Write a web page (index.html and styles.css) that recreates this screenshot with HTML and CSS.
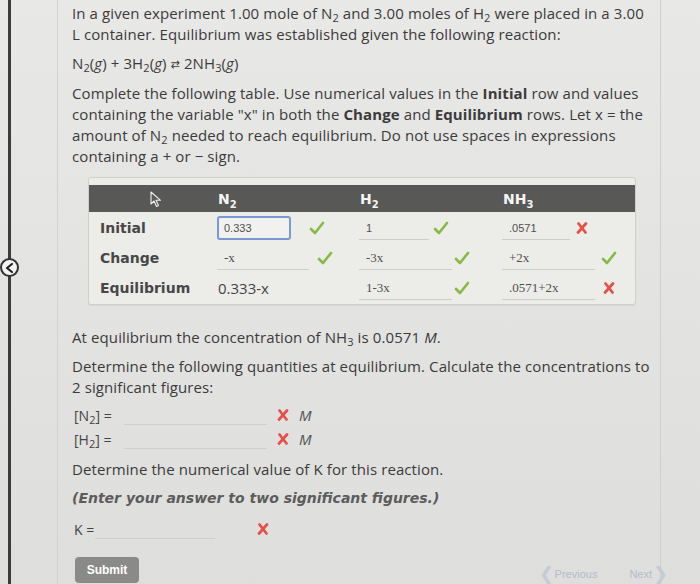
FILE: index.html
```html
<!DOCTYPE html>
<html>
<head>
<meta charset="utf-8">
<link rel="stylesheet" href="styles.css">
</head>
<body>
<div class="screen">
  <div class="rail">
    <div class="rail-line"></div>
    <div class="rail-btn">
      <svg width="12" height="12" viewBox="0 0 12 12"><path d="M8 2 L3 6 L8 10" fill="none" stroke="#222" stroke-width="2.2" stroke-linecap="round" stroke-linejoin="round"/></svg>
    </div>
  </div>
  <div class="page">
    <p class="para first">In a given experiment 1.00 mole of N<sub>2</sub> and 3.00 moles of H<sub>2</sub> were placed in a 3.00 L container. Equilibrium was established given the following reaction:</p>
    <p class="para eq">N<sub>2</sub>(<i>g</i>) + 3H<sub>2</sub>(<i>g</i>) <span class="arrows">⇄</span> 2NH<sub>3</sub>(<i>g</i>)</p>
    <p class="para">Complete the following table. Use numerical values in the <b>Initial</b> row and values containing the variable "x" in both the <b>Change</b> and <b>Equilibrium</b> rows. Let x = the amount of N<sub>2</sub> needed to reach equilibrium. Do not use spaces in expressions containing a + or − sign.</p>

    <div class="ice">
      <div class="ice-head">
        <div class="hc hc-label">
          <svg class="cursor" width="12" height="17" viewBox="0 0 12 17"><path d="M1 1 L1 13 L4 10 L6.5 15.5 L8.5 14.6 L6 9.3 L10.5 9.3 Z" fill="#5a5a58" stroke="#f0f0f0" stroke-width="1.1" stroke-linejoin="round"/></svg>
        </div>
        <div class="hc c1">N<sub>2</sub></div>
        <div class="hc c2">H<sub>2</sub></div>
        <div class="hc c3">NH<sub>3</sub></div>
      </div>
      <div class="ice-row">
        <div class="rl">Initial</div>
        <div class="cell c1"><span class="field boxed w74 sans">0.333</span><span class="mk m-ok ml26"></span></div>
        <div class="cell c2"><span class="field w70 sans">1</span><span class="mk m-ok ml4"></span></div>
        <div class="cell c3"><span class="field w68 sans">.0571</span><span class="mk m-no ml4"></span></div>
      </div>
      <div class="ice-row">
        <div class="rl">Change</div>
        <div class="cell c1"><span class="field w92">-x</span><span class="mk m-ok ml8"></span></div>
        <div class="cell c2"><span class="field w93">-3x</span><span class="mk m-ok ml2"></span></div>
        <div class="cell c3"><span class="field w93">+2x</span><span class="mk m-ok ml6"></span></div>
      </div>
      <div class="ice-row">
        <div class="rl">Equilibrium</div>
        <div class="cell c1"><span class="plain">0.333-x</span></div>
        <div class="cell c2"><span class="field w93">1-3x</span><span class="mk m-ok ml2"></span></div>
        <div class="cell c3"><span class="field w93">.0571+2x</span><span class="mk m-no ml6"></span></div>
      </div>
    </div>

    <p class="para at">At equilibrium the concentration of NH<sub>3</sub> is 0.0571 <i>M</i>.</p>
    <p class="para">Determine the following quantities at equilibrium. Calculate the concentrations to 2 significant figures:</p>
    <div class="ans-list">
      <div class="ans"><span class="al">[N<sub>2</sub>] =</span><span class="aline w143"></span><span class="mk m-no ml8"></span><i class="unit">M</i></div>
      <div class="ans"><span class="al">[H<sub>2</sub>] =</span><span class="aline w143"></span><span class="mk m-no ml8"></span><i class="unit">M</i></div>
    </div>
    <p class="para">Determine the numerical value of K for this reaction.</p>
    <p class="para hint">(Enter your answer to two significant figures.)</p>
    <div class="ans k"><span class="al">K =</span><span class="aline w120"></span><span class="mk m-no ml40"></span></div>

    <div class="foot">
      <div class="submit">Submit</div>
      <div class="nav">
        <span class="chev">❮</span><span class="prev">Previous</span>
        <span class="next">Next</span><span class="chev">❯</span>
      </div>
    </div>
  </div>
  <div class="side"></div>
</div>
</body>
</html>
```
FILE: styles.css
```css
html, body {
  margin: 0;
  padding: 0;
}
body {
  width: 700px;
  height: 584px;
  overflow: hidden;
  background: linear-gradient(180deg, #e8e8e6 0%, #e3e3e1 50%, #dededc 100%);
  font-family: "Open Sans", "DejaVu Sans", sans-serif;
  color: #3b3b3b;
}
.screen {
  display: flex;
  height: 584px;
}
.rail {
  width: 57px;
  flex: none;
  position: relative;
}
.rail-line {
  position: absolute;
  left: 8px;
  top: 0;
  bottom: 0;
  width: 3px;
  background: #3c3c3c;
}
.rail-btn {
  position: absolute;
  left: 0;
  top: 258px;
  width: 19px;
  height: 19px;
  border-radius: 50%;
  background: #f4f4f4;
  border: 2px solid #333;
  box-sizing: border-box;
  display: flex;
  align-items: center;
  justify-content: center;
}
.page {
  width: 604px;
  flex: none;
  border-left: 1px solid #d2d2d0;
  border-right: 1px solid #cfcfcd;
  padding-left: 14px;
  box-sizing: border-box;
  position: relative;
}
.side {
  flex: 1;
}
.para {
  margin: 0 0 8px 0;
  font-size: 15px;
  line-height: 21px;
  width: 580px;
  letter-spacing: 0.1px;
}
.para.first {
  margin-top: 3px;
}
.para.eq {
  margin-bottom: 9px;
}
b {
  font-weight: 700;
}
sub {
  font-size: 11px;
  line-height: 0;
  vertical-align: -3px;
}
.arrows {
  font-size: 11px;
  vertical-align: 1px;
}
.ice {
  margin: 10px 0 0 16px;
  width: 548px;
  height: 128px;
  background: #ecece9;
  border: 1px solid #cfcfcc;
  border-radius: 3px;
  padding-top: 7px;
  box-sizing: border-box;
  box-shadow: 0 1px 1px rgba(0,0,0,0.06);
}
.ice-head {
  display: flex;
  height: 27px;
  background: #585856;
  color: #f4f4f4;
  font-family: "DejaVu Sans", sans-serif;
  font-weight: bold;
  font-size: 14px;
  align-items: center;
}
.ice-head sub {
  font-size: 10px;
  vertical-align: -4px;
}
.hc-label {
  width: 129px;
  display: flex;
  justify-content: center;
  padding-left: 4px;
  box-sizing: border-box;
}
.cursor {
  margin-top: 2px;
}
.c1 { width: 142px; flex: none; }
.c2 { width: 143px; flex: none; }
.c3 { width: 130px; flex: none; }
.hc.c1, .hc.c2, .hc.c3 {
  padding-top: 1px;
}
.ice-row {
  display: flex;
  align-items: center;
  height: 30px;
}
.ice-row:nth-child(2) { margin-top: 1px; }
.rl {
  width: 117px;
  padding-left: 11px;
  flex: none;
  font-family: "DejaVu Sans", sans-serif;
  font-weight: bold;
  font-size: 14px;
  color: #474747;
  box-sizing: content-box;
}
.cell {
  display: flex;
  align-items: center;
}
.field {
  height: 23px;
  box-sizing: border-box;
  border-bottom: 1px solid #cdcdca;
  font-family: "Liberation Serif", serif;
  font-size: 13px;
  color: #505050;
  padding-left: 7px;
  display: flex;
  align-items: center;
  flex: none;
}
.field.sans {
  font-family: "Liberation Sans", sans-serif;
  font-size: 11px;
}
.field.boxed {
  border: 2px solid #7c97d6;
  border-radius: 3px;
  background: #f1f1ef;
  padding-left: 5px;
  height: 24px;
}
.plain {
  font-size: 15px;
  color: #444;
  padding-left: 1px;
}
.w68 { width: 68px; }
.w70 { width: 70px; }
.w74 { width: 74px; }
.w92 { width: 92px; }
.w93 { width: 93px; }
.w120 { width: 120px; }
.w143 { width: 143px; }
.ml2 { margin-left: 2px; }
.ml4 { margin-left: 4px; }
.ml6 { margin-left: 6px; }
.ml8 { margin-left: 8px; }
.ml26 { margin-left: 18px; }
.ml40 { margin-left: 40px; }
.mk {
  display: inline-block;
  width: 16px;
  height: 16px;
  flex: none;
  background-repeat: no-repeat;
  background-position: center;
}
.m-ok {
  background-image: url("data:image/svg+xml;utf8,<svg xmlns='http://www.w3.org/2000/svg' width='16' height='16' viewBox='0 0 16 16'><path d='M2 9 L6 13 L14 3' fill='none' stroke='%2388b944' stroke-width='2.6' stroke-linecap='round' stroke-linejoin='round'/></svg>");
}
.m-no {
  background-image: url("data:image/svg+xml;utf8,<svg xmlns='http://www.w3.org/2000/svg' width='16' height='16' viewBox='0 0 16 16'><path d='M4.5 3.5 L11.5 12.5 M12 3.5 L4 12.5' fill='none' stroke='%23e2524a' stroke-width='2.8' stroke-linecap='round'/></svg>");
}
.at {
  margin-top: 22px;
}
.ans-list {
  margin-top: -3px;
}
.ans {
  display: flex;
  align-items: center;
  height: 24px;
  font-size: 14px;
  color: #444;
}
.ans .al {
  width: 50px;
  flex: none;
  padding-left: 2px;
}
.aline {
  height: 19px;
  border-bottom: 1px solid #cfcfcc;
  flex: none;
}
.unit {
  font-size: 15px;
  margin-left: 8px;
  color: #555;
}
.ans-list + .para {
  margin-top: 8px;
}
.hint {
  font-family: "DejaVu Sans", sans-serif;
  font-weight: bold;
  font-style: italic;
  font-size: 14px;
  color: #5c5c5c;
  letter-spacing: 0;
  margin-bottom: 8px;
}
.ans.k .al {
  width: 21px;
  padding-left: 2px;
}
.foot {
  display: flex;
  justify-content: space-between;
  align-items: flex-end;
  margin-top: 16px;
  padding-left: 3px;
}
.submit {
  width: 64px;
  height: 26px;
  background: #8a8a88;
  color: #fff;
  border-radius: 4px;
  font-family: "Liberation Sans", sans-serif;
  font-weight: bold;
  font-size: 12px;
  display: flex;
  align-items: center;
  justify-content: center;
}
.nav {
  display: flex;
  align-items: center;
  color: #b4bccb;
  font-family: "Liberation Sans", sans-serif;
  font-size: 11px;
  line-height: 20px;
  margin-right: -8px;
  margin-bottom: -1px;
}
.chev {
  font-size: 18px;
  color: #c5cbd6;
}
.prev {
  margin-left: 1px;
}
.next {
  margin-left: 32px;
  margin-right: 1px;
}
```
